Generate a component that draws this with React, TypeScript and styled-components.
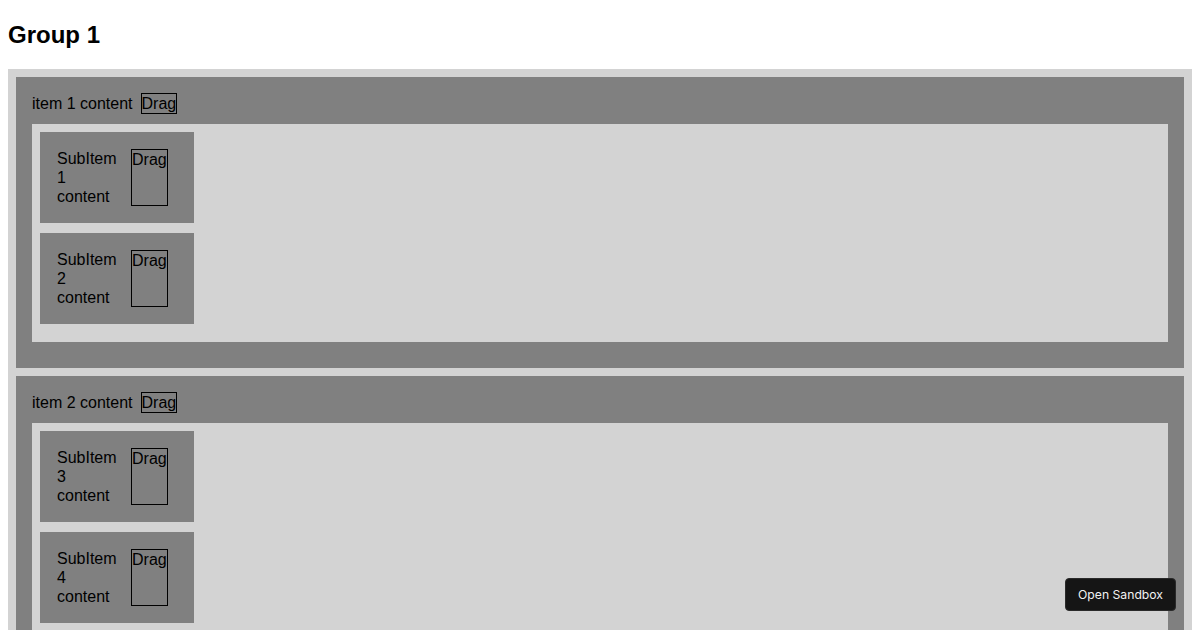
import styled, { createGlobalStyle } from "styled-components";

const GlobalStyle = createGlobalStyle`
  body {
    margin: 8px;
    font-family: "Liberation Sans", Arial, sans-serif;
    font-size: 16px;
    color: #000;
    background: #fff;
  }
`;

const Title = styled.h2`
  margin: 13px 0 20px;
  font-size: 24px;
  line-height: 28px;
  font-weight: bold;
`;

const Group = styled.div`
  background: lightgrey;
  padding: 8px 8px 0;
`;

const Item = styled.div`
  background: grey;
  padding: 16px;
  margin-bottom: 8px;
`;

const ItemHeader = styled.div`
  display: flex;
  align-items: center;
  height: 21px;
  margin-bottom: 10px;
`;

const Handle = styled.span<{ $tall?: boolean }>`
  flex: none;
  border: 1px solid #000;
  line-height: 19px;
  margin-left: ${(p) => (p.$tall ? "0" : "8px")};
`;

const SubList = styled.div`
  background: lightgrey;
  padding: 8px;
  margin-bottom: 10px;
`;

const SubItem = styled.div`
  display: flex;
  align-items: stretch;
  box-sizing: border-box;
  width: 154px;
  padding: 17px;
  background: grey;
  margin-bottom: 10px;
`;

const SubText = styled.div`
  width: 62px;
  margin-right: 12px;
  line-height: 19px;
`;

const SandboxButton = styled.button`
  position: fixed;
  right: 24px;
  bottom: 19px;
  height: 33px;
  padding: 0 12px;
  border: 1px solid #2a2a2a;
  border-radius: 4px;
  background: #151515;
  color: #f2f2f2;
  font-family: Inter, "Liberation Sans", sans-serif;
  font-size: 12.2px;
  cursor: pointer;
`;

const items = [
  { id: 1, subs: [1, 2] },
  { id: 2, subs: [3, 4] },
];

export default function App() {
  return (
    <>
      <GlobalStyle />
      <Title>Group 1</Title>
      <Group>
        {items.map((item) => (
          <Item key={item.id}>
            <ItemHeader>
              item {item.id} content
              <Handle>Drag</Handle>
            </ItemHeader>
            <SubList>
              {item.subs.map((s) => (
                <SubItem key={s}>
                  <SubText>SubItem {s} content</SubText>
                  <Handle $tall>Drag</Handle>
                </SubItem>
              ))}
            </SubList>
          </Item>
        ))}
      </Group>
      <SandboxButton>Open Sandbox</SandboxButton>
    </>
  );
}
